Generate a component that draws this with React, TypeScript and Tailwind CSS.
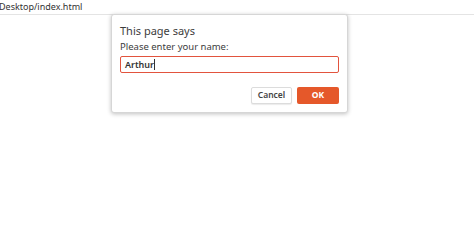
import React from "react";

const font = { fontFamily: '"Noto Sans", "Open Sans", sans-serif' };

const PromptDialog: React.FC = () => {
  return (
    <div className="absolute left-[111px] top-[14px] w-[237px] h-[99px] bg-white rounded-[3px] border border-[#d6d6d6] shadow-[0_1px_4px_rgba(0,0,0,0.25)] pl-[8px] pr-[8px] pt-[9px]">
      <p className="text-[11px] leading-[14px] text-[#3c3c3c]">This page says</p>
      <p className="mt-[3px] text-[9.5px] leading-[12px] text-[#3c3c3c]">
        Please enter your name:
      </p>
      <div className="mt-[3px] h-[17px] border border-[#e2543e] rounded-[2px] flex items-center pl-[4px]">
        <span className="text-[9px] font-semibold text-[#333]">Arthur</span>
        <span className="w-px h-[11px] bg-[#333]" />
      </div>
      <div className="mt-[14px] flex justify-end gap-[5px]">
        <button className="w-[41px] h-[17px] rounded-[2px] border border-[#dcdcdc] bg-white text-[8.5px] font-semibold text-[#444] shadow-[0_1px_1px_rgba(0,0,0,0.08)]">
          Cancel
        </button>
        <button className="w-[42px] h-[17px] rounded-[2px] bg-[#e5582a] text-[8.5px] font-bold text-white">
          OK
        </button>
      </div>
    </div>
  );
};

export default function App() {
  return (
    <div className="relative w-[474px] h-[207px] bg-white overflow-hidden" style={font}>
      <div className="h-[15px] border-b border-[#e4e4e4] -ml-[1px] pt-[1px]">
        <span className="block text-[9px] leading-[11px] text-[#333]">Desktop/index.html</span>
      </div>
      <PromptDialog />
    </div>
  );
}
